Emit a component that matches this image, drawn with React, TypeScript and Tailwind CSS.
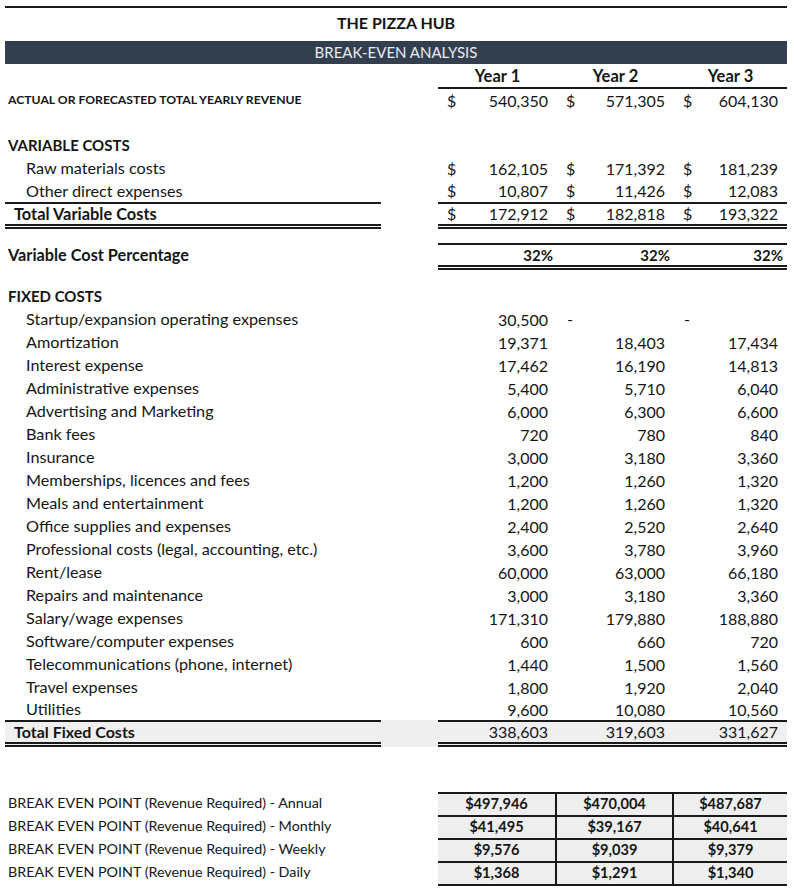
import React from "react";

const W = ["w-[119px]", "w-[117px]", "w-[113px]"];

const fixed: [string, string, string, string][] = [
  ["Startup/expansion operating expenses", "30,500", "-", "-"],
  ["Amortization", "19,371", "18,403", "17,434"],
  ["Interest expense", "17,462", "16,190", "14,813"],
  ["Administrative expenses", "5,400", "5,710", "6,040"],
  ["Advertising and Marketing", "6,000", "6,300", "6,600"],
  ["Bank fees", "720", "780", "840"],
  ["Insurance", "3,000", "3,180", "3,360"],
  ["Memberships, licences and fees", "1,200", "1,260", "1,320"],
  ["Meals and entertainment", "1,200", "1,260", "1,320"],
  ["Office supplies and expenses", "2,400", "2,520", "2,640"],
  ["Professional costs (legal, accounting, etc.)", "3,600", "3,780", "3,960"],
  ["Rent/lease", "60,000", "63,000", "66,180"],
  ["Repairs and maintenance", "3,000", "3,180", "3,360"],
  ["Salary/wage expenses", "171,310", "179,880", "188,880"],
  ["Software/computer expenses", "600", "660", "720"],
  ["Telecommunications (phone, internet)", "1,440", "1,500", "1,560"],
  ["Travel expenses", "1,800", "1,920", "2,040"],
  ["Utilities", "9,600", "10,080", "10,560"],
];

const breakEven: [string, string, string, string][] = [
  ["BREAK EVEN POINT (Revenue Required) - Annual", "$497,946", "$470,004", "$487,687"],
  ["BREAK EVEN POINT (Revenue Required) - Monthly", "$41,495", "$39,167", "$40,641"],
  ["BREAK EVEN POINT (Revenue Required) - Weekly", "$9,576", "$9,039", "$9,379"],
  ["BREAK EVEN POINT (Revenue Required) - Daily", "$1,368", "$1,291", "$1,340"],
];

function DollarRow({
  label,
  vals,
  labelClass,
  h = "h-[23px]",
}: {
  label: string;
  vals: string[];
  labelClass: string;
  h?: string;
}) {
  return (
    <div className={`flex ${h} items-center`}>
      <div className={`w-[433px] shrink-0 ${labelClass}`}>{label}</div>
      {vals.map((v, i) => (
        <div key={i} className={`${W[i]} shrink-0 flex justify-between px-[9px] text-[16px]`}>
          <span>$</span>
          <span>{v}</span>
        </div>
      ))}
    </div>
  );
}

function Rule({ left, thick = false }: { left: boolean; thick?: boolean }) {
  const cls = thick ? "h-[5px] border-y-2 border-[#1a1a1a]" : "h-[2px] bg-[#1a1a1a]";
  return (
    <div className="flex">
      <div className="w-[433px] shrink-0">{left && <div className={`w-[376px] ${cls}`} />}</div>
      <div className={`w-[349px] ${cls}`} />
    </div>
  );
}

export default function App() {
  return (
    <div className="w-[794px] h-[888px] bg-white text-[#151515] font-['Lato',_'Open_Sans',_sans-serif] text-[16.2px] leading-none overflow-hidden">
      <div className="ml-[5px] w-[782px]">
        <div className="h-[6px]" />
        <div className="h-[2px] bg-[#1a1a1a]" />
        <div className="h-[33px] flex items-center justify-center pb-[3px] font-bold text-[16px]">THE PIZZA HUB</div>
        <div className="h-[23px] bg-[#333f4f] text-[#e9ecef] flex items-center justify-center text-[15px]">
          BREAK-EVEN ANALYSIS
        </div>
        <div className="h-[1px]" />
        <div className="flex h-[22px] items-center font-bold text-[16.5px]">
          <div className="w-[433px] shrink-0" />
          <div className={`${W[0]} text-center`}>Year 1</div>
          <div className={`${W[1]} text-center`}>Year 2</div>
          <div className={`${W[2]} text-center`}>Year 3</div>
        </div>
        <Rule left={false} />
        <DollarRow
          label="ACTUAL OR FORECASTED TOTAL YEARLY REVENUE"
          vals={["540,350", "571,305", "604,130"]}
          labelClass="pl-[3px] font-bold text-[12.2px]"
        />
        <div className="h-[22px]" />
        <div className="flex h-[23px] items-center font-bold pl-[3px] text-[15px]">VARIABLE COSTS</div>
        <DollarRow label="Raw materials costs" vals={["162,105", "171,392", "181,239"]} labelClass="pl-[21px]" />
        <DollarRow label="Other direct expenses" vals={["10,807", "11,426", "12,083"]} labelClass="pl-[21px]" h="h-[22px]" />
        <Rule left />
        <DollarRow
          label="Total Variable Costs"
          vals={["172,912", "182,818", "193,322"]}
          labelClass="pl-[9px] font-bold text-[16.4px]"
          h="h-[20px]"
        />
        <Rule left thick />
        <div className="h-[14px]" />
        <Rule left={false} />
        <div className="flex h-[20px] items-center font-bold">
          <div className="w-[433px] shrink-0 pl-[3px] text-[16.3px]">Variable Cost Percentage</div>
          {W.map((w, i) => (
            <div key={i} className={`${w} text-right pr-[4px] text-[15px]`}>
              32%
            </div>
          ))}
        </div>
        <Rule left={false} thick />
        <div className="h-[15px]" />
        <div className="flex h-[23px] items-center font-bold pl-[3px] text-[15px]">FIXED COSTS</div>
        {fixed.map(([label, a, b, c], idx) => (
          <div key={label} className={`flex ${idx === fixed.length - 1 ? "h-[21px]" : "h-[23px]"} items-center`}>
            <div className="w-[433px] shrink-0 pl-[21px]">{label}</div>
            {[a, b, c].map((v, i) =>
              v === "-" ? (
                <div key={i} className={`${W[i]} pl-[10px]`}>
                  -
                </div>
              ) : (
                <div key={i} className={`${W[i]} text-right pr-[9px] text-[16px]`}>
                  {v}
                </div>
              )
            )}
          </div>
        ))}
        <div className="bg-[#efefef]">
          <Rule left />
          <div className="flex h-[20px] items-center">
            <div className="w-[433px] shrink-0 pl-[9px] font-bold text-[16px]">Total Fixed Costs</div>
            {["338,603", "319,603", "331,627"].map((v, i) => (
              <div key={i} className={`${W[i]} text-right pr-[9px] text-[16px]`}>
                {v}
              </div>
            ))}
          </div>
          <Rule left thick />
        </div>
        <div className="h-[45px]" />
        {breakEven.map(([label, a, b, c], idx) => (
          <div key={label} className="flex h-[23px]">
            <div className="w-[433px] shrink-0 pl-[3px] flex items-center text-[14.3px]">{label}</div>
            <div
              className={`flex w-[349px] bg-[#eeeeee] border-t-2 border-[#1a1a1a] ${
                idx === breakEven.length - 1 ? "border-b-2 h-[25px]" : ""
              }`}
            >
              {[a, b, c].map((v, i) => (
                <div
                  key={i}
                  className={`${W[i]} flex items-center justify-center font-bold text-[14.6px] ${
                    i < 2 ? "border-r-2 border-[#1a1a1a]" : ""
                  }`}
                >
                  {v}
                </div>
              ))}
            </div>
          </div>
        ))}
      </div>
    </div>
  );
}
